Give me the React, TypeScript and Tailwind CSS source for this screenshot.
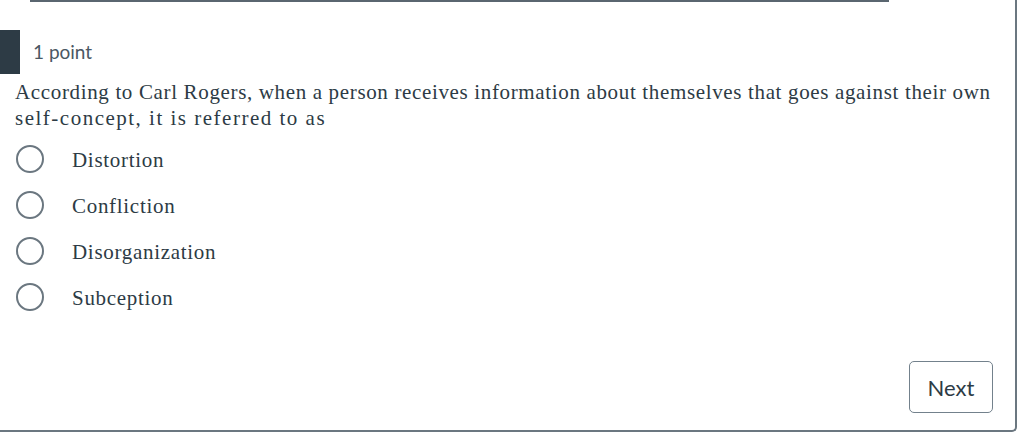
import React from "react";

const options = ["Distortion", "Confliction", "Disorganization", "Subception"];

export default function App() {
  return (
    <div className="w-[1018px] h-[434px] bg-white overflow-hidden">
      <div className="w-[1017px] h-[432px] border-r-[2px] border-b-[2px] border-[#6b7780] rounded-br-[5px] flex flex-col">
        <div className="ml-[30px] w-[859px] h-[2px] bg-[#5a6670]" />
        <div className="flex items-center mt-[28px] h-[44px]">
          <div className="w-[20px] h-[44px] bg-[#2d3b45]" />
          <span
            className="ml-[13px] text-[19px] text-[#4a5763]"
            style={{ fontFamily: "Lato, 'Liberation Sans', sans-serif" }}
          >
            1 point
          </span>
        </div>
        <p
          className="ml-[15px] mt-[5px] text-[21px] tracking-[0.65px] leading-[26px] text-[#2d3b45] whitespace-nowrap"
          style={{ fontFamily: "'Liberation Serif', 'Times New Roman', serif" }}
        >
          According to Carl Rogers, when a person receives information about themselves that goes against their own
          <br />
          <span className="tracking-[1.5px]">self-concept, it is referred to as</span>
        </p>
        <div className="flex flex-col mt-[14px] gap-[18px]">
          {options.map((o) => (
            <div key={o} className="flex items-center h-[28px]">
              <div className="ml-[16px] w-[28px] h-[28px] rounded-full border-[2px] border-[#6b7780]" />
              <span
                className="ml-[28px] mt-[3px] text-[21px] tracking-[0.7px] text-[#2d3b45]"
                style={{ fontFamily: "'Liberation Serif', 'Times New Roman', serif" }}
              >
                {o}
              </span>
            </div>
          ))}
        </div>
        <div className="flex justify-end mt-auto mb-[17px] mr-[22px]">
          <button
            className="w-[84px] h-[52px] border border-[#73818c] rounded-[5px] text-[22px] text-[#2d3b45] bg-white"
            style={{ fontFamily: "Lato, 'Liberation Sans', sans-serif" }}
          >
            Next
          </button>
        </div>
      </div>
    </div>
  );
}
